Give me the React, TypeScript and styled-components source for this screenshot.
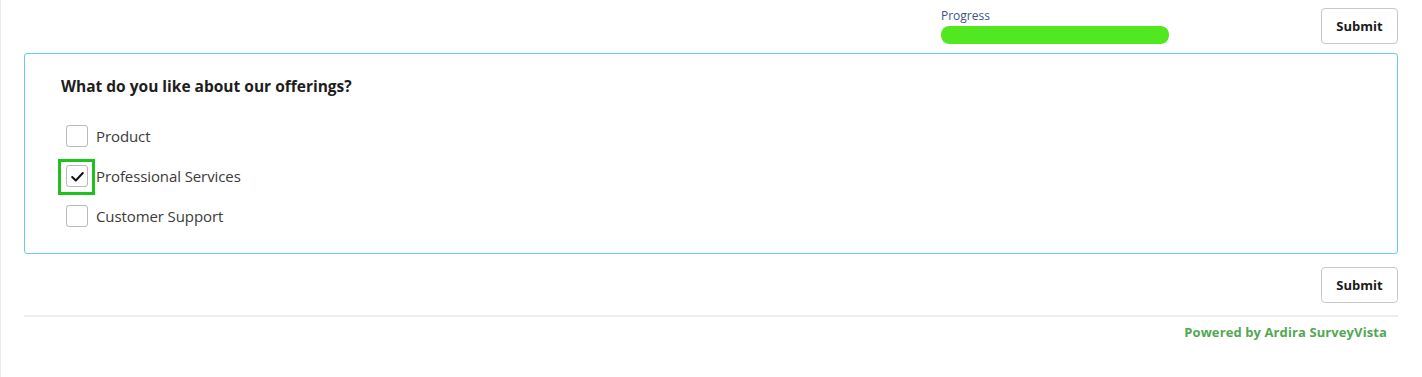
import React, { useState } from "react";
import styled, { createGlobalStyle } from "styled-components";

const GlobalStyle = createGlobalStyle`
  html, body { margin: 0; padding: 0; background: #ffffff; }
  body { font-family: "Open Sans", "Noto Sans", Arial, sans-serif; color: #222; }
`;

const Page = styled.div`
  box-sizing: border-box;
  min-height: 377px;
  border-left: 1px solid #ececec;
  padding: 0 24px 0 23px;
  display: flex;
  flex-direction: column;
`;

const TopBar = styled.div`
  display: flex;
  justify-content: flex-end;
  align-items: flex-start;
  height: 53px;
  box-sizing: border-box;
  padding-top: 8px;
`;

const ProgressBlock = styled.div`
  display: flex;
  flex-direction: column;
  width: 228px;
  margin-right: 152px;
`;

const ProgressLabel = styled.span`
  font-size: 12px;
  line-height: 16px;
  color: #3b5486;
`;

const ProgressTrack = styled.div`
  margin-top: 2px;
  height: 18px;
  border-radius: 8px;
  background: #e9ecef;
  overflow: hidden;
`;

const ProgressFill = styled.div`
  height: 100%;
  background: #52e81f;
  border-radius: 8px;
`;

const SubmitButton = styled.button`
  box-sizing: border-box;
  width: 77px;
  height: 36px;
  border: 1px solid #c8c8c8;
  border-radius: 4px;
  background: #fff;
  font-family: "Open Sans", "Noto Sans", Arial, sans-serif;
  font-weight: 700;
  font-size: 13px;
  color: #1a1a1a;
  cursor: pointer;
  padding: 0;
`;

const Card = styled.div`
  box-sizing: border-box;
  height: 201px;
  border: 1px solid #6cc7f7;
  border-radius: 3px;
  padding: 22px 36px 0 36px;
`;

const Question = styled.h2`
  margin: 0 0 29px 0;
  font-size: 15.5px;
  line-height: 20px;
  font-weight: 700;
  color: #1d1d1d;
`;

const Options = styled.div`
  display: flex;
  flex-direction: column;
  gap: 18px;
  padding-left: 5px;
`;

const OptionRow = styled.label`
  display: flex;
  align-items: center;
  gap: 8px;
  height: 22px;
  cursor: pointer;
`;

const FocusRing = styled.span<{ $focused?: boolean }>`
  display: flex;
  margin: -6px -7px -8px -8px;
  padding: 3px 4px 5px 5px;
  border: 3px solid ${(p) => (p.$focused ? "#1fc11f" : "transparent")};
`;

const Box = styled.span`
  box-sizing: border-box;
  width: 22px;
  height: 22px;
  border: 1px solid #b9b9b9;
  border-radius: 3px;
  background: #fff;
  display: flex;
  align-items: center;
  justify-content: center;
`;

const OptionText = styled.span`
  font-size: 15px;
  color: #3a3a3a;
  letter-spacing: -0.1px;
`;

const BottomBar = styled.div`
  display: flex;
  justify-content: flex-end;
  margin-top: 13px;
`;

const Divider = styled.hr`
  margin: 12px 0 0 0;
  border: none;
  height: 2px;
  background: #eeeeee;
`;

const Footer = styled.div`
  display: flex;
  justify-content: flex-end;
  padding: 6px 11px 0 0;
  font-size: 13px;
  font-weight: 700;
  color: #52a852;
  letter-spacing: 0.1px;
`;

const Check = () => (
  <svg width="15" height="15" viewBox="0 0 15 15" fill="none">
    <path d="M2.2 8 L5.8 11.5 L12.8 4" stroke="#111" strokeWidth="2" strokeLinecap="round" strokeLinejoin="round" />
  </svg>
);

const options = ["Product", "Professional Services", "Customer Support"];

export default function App() {
  const [checked] = useState<Record<string, boolean>>({ "Professional Services": true });
  return (
    <>
      <GlobalStyle />
      <Page>
        <TopBar>
          <ProgressBlock>
            <ProgressLabel>Progress</ProgressLabel>
            <ProgressTrack>
              <ProgressFill style={{ width: "100%" }} />
            </ProgressTrack>
          </ProgressBlock>
          <SubmitButton>Submit</SubmitButton>
        </TopBar>
        <Card>
          <Question>What do you like about our offerings?</Question>
          <Options>
            {options.map((o) => (
              <OptionRow key={o}>
                <FocusRing $focused={o === "Professional Services"}>
                  <Box>{checked[o] && <Check />}</Box>
                </FocusRing>
                <OptionText>{o}</OptionText>
              </OptionRow>
            ))}
          </Options>
        </Card>
        <BottomBar>
          <SubmitButton>Submit</SubmitButton>
        </BottomBar>
        <Divider />
        <Footer>Powered by Ardira SurveyVista</Footer>
      </Page>
    </>
  );
}
